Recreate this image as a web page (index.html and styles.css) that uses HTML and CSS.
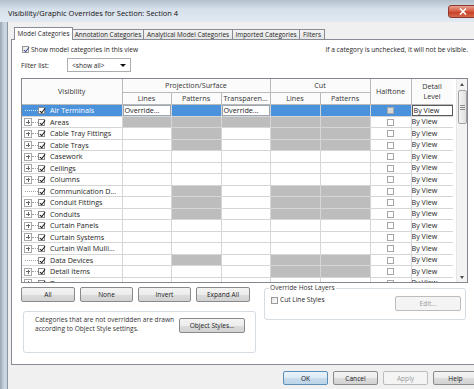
FILE: index.html
```html
<!DOCTYPE html>
<html lang="en">
<head>
    <meta charset="UTF-8">
    <title>Visibility/Graphic Overrides for Section: Section 4</title>
    <link rel="stylesheet" href="styles.css">
</head>
<body>
<div class="window">
    <div class="titlebar">
        <span class="title">Visibility/Graphic Overrides for Section: Section 4</span>
        <span class="close">
            <svg width="8" height="7" viewBox="0 0 8 7"><path d="M1 0.5L7 6.5M7 0.5L1 6.5" stroke="#fff" stroke-width="1.6"/></svg>
        </span>
    </div>
    <div class="client">
        <div class="tabs">
            <span class="tab active t-model">Model Categories</span>
            <span class="tab t-anno">Annotation Categories</span>
            <span class="tab t-anal">Analytical Model Categories</span>
            <span class="tab t-imp">Imported Categories</span>
            <span class="tab t-filt">Filters</span>
        </div>
        <div class="panel">
            <div class="top-row">
                <span class="box on blue"></span>
                <span class="lbl">Show model categories in this view</span>
                <span class="note">If a category is unchecked, it will not be visible.</span>
            </div>
            <div class="filter-row">
                <span class="filter-label">Filter list:</span>
                <div class="select"><span>&lt;show all&gt;</span><span class="caret"></span></div>
            </div>
            <div class="grid-wrap">
                <div class="grid-clip">
                    <table class="grid">
                        <colgroup>
                            <col style="width:100px"><col style="width:49px"><col style="width:50px"><col style="width:49px">
                            <col style="width:50px"><col style="width:50px"><col style="width:41px"><col style="width:42px">
                        </colgroup>
                        <thead>
                            <tr class="h1">
                                <th rowspan="2">Visibility</th>
                                <th colspan="3">Projection/Surface</th>
                                <th colspan="2">Cut</th>
                                <th rowspan="2">Halftone</th>
                                <th rowspan="2" class="two">Detail<br>Level</th>
                            </tr>
                            <tr class="h2">
                                <th>Lines</th><th>Patterns</th><th>Transparen...</th><th>Lines</th><th>Patterns</th>
                            </tr>
                        </thead>
                        <tbody>
                            <tr class="sel">
                                <td class="vis"><span class="node leaf"></span><span class="box on"></span><span class="name">Air Terminals</span></td>
                                <td class="edit">Override...</td><td></td><td class="edit">Override...</td><td></td><td></td>
                                <td class="half"><span class="box dim"></span></td><td class="det"><span class="combo">By View</span></td>
                            </tr>
                            <tr>
                                <td class="vis"><span class="node exp"></span><span class="box on"></span><span class="name">Areas</span></td>
                                <td class="na"></td><td class="na"></td><td class="na"></td><td class="na"></td><td class="na"></td>
                                <td class="half"><span class="box"></span></td><td class="det">By View</td>
                            </tr>
                            <tr>
                                <td class="vis"><span class="node exp"></span><span class="box on"></span><span class="name">Cable Tray Fittings</span></td>
                                <td></td><td class="na"></td><td></td><td class="na"></td><td class="na"></td>
                                <td class="half"><span class="box"></span></td><td class="det">By View</td>
                            </tr>
                            <tr>
                                <td class="vis"><span class="node exp"></span><span class="box on"></span><span class="name">Cable Trays</span></td>
                                <td></td><td class="na"></td><td></td><td class="na"></td><td class="na"></td>
                                <td class="half"><span class="box"></span></td><td class="det">By View</td>
                            </tr>
                            <tr>
                                <td class="vis"><span class="node exp"></span><span class="box on"></span><span class="name">Casework</span></td>
                                <td></td><td></td><td></td><td></td><td></td>
                                <td class="half"><span class="box"></span></td><td class="det">By View</td>
                            </tr>
                            <tr>
                                <td class="vis"><span class="node exp"></span><span class="box on"></span><span class="name">Ceilings</span></td>
                                <td></td><td></td><td></td><td></td><td></td>
                                <td class="half"><span class="box"></span></td><td class="det">By View</td>
                            </tr>
                            <tr>
                                <td class="vis"><span class="node exp"></span><span class="box on"></span><span class="name">Columns</span></td>
                                <td></td><td></td><td></td><td></td><td></td>
                                <td class="half"><span class="box"></span></td><td class="det">By View</td>
                            </tr>
                            <tr>
                                <td class="vis"><span class="node leaf"></span><span class="box on"></span><span class="name">Communication D...</span></td>
                                <td></td><td class="na"></td><td></td><td class="na"></td><td class="na"></td>
                                <td class="half"><span class="box"></span></td><td class="det">By View</td>
                            </tr>
                            <tr>
                                <td class="vis"><span class="node exp"></span><span class="box on"></span><span class="name">Conduit Fittings</span></td>
                                <td></td><td class="na"></td><td></td><td class="na"></td><td class="na"></td>
                                <td class="half"><span class="box"></span></td><td class="det">By View</td>
                            </tr>
                            <tr>
                                <td class="vis"><span class="node exp"></span><span class="box on"></span><span class="name">Conduits</span></td>
                                <td></td><td class="na"></td><td></td><td class="na"></td><td class="na"></td>
                                <td class="half"><span class="box"></span></td><td class="det">By View</td>
                            </tr>
                            <tr>
                                <td class="vis"><span class="node exp"></span><span class="box on"></span><span class="name">Curtain Panels</span></td>
                                <td></td><td></td><td></td><td></td><td></td>
                                <td class="half"><span class="box"></span></td><td class="det">By View</td>
                            </tr>
                            <tr>
                                <td class="vis"><span class="node exp"></span><span class="box on"></span><span class="name">Curtain Systems</span></td>
                                <td></td><td></td><td></td><td></td><td></td>
                                <td class="half"><span class="box"></span></td><td class="det">By View</td>
                            </tr>
                            <tr>
                                <td class="vis"><span class="node exp"></span><span class="box on"></span><span class="name">Curtain Wall Mulli...</span></td>
                                <td></td><td></td><td></td><td></td><td></td>
                                <td class="half"><span class="box"></span></td><td class="det">By View</td>
                            </tr>
                            <tr>
                                <td class="vis"><span class="node leaf"></span><span class="box on"></span><span class="name">Data Devices</span></td>
                                <td></td><td class="na"></td><td></td><td class="na"></td><td class="na"></td>
                                <td class="half"><span class="box"></span></td><td class="det">By View</td>
                            </tr>
                            <tr>
                                <td class="vis"><span class="node exp"></span><span class="box on"></span><span class="name">Detail Items</span></td>
                                <td></td><td></td><td></td><td class="na"></td><td class="na"></td>
                                <td class="half"><span class="box"></span></td><td class="det">By View</td>
                            </tr>
                            <tr>
                                <td class="vis"><span class="node exp"></span><span class="box on"></span><span class="name">Doors</span></td>
                                <td></td><td></td><td></td><td></td><td></td>
                                <td class="half"><span class="box"></span></td><td class="det">By View</td>
                            </tr>
                        </tbody>
                    </table>
                </div>
                <div class="scrollbar">
                    <span class="sb-btn"><span class="tri up"></span></span>
                    <span class="sb-thumb"><span class="grip"></span></span>
                    <span class="sb-track"></span>
                    <span class="sb-btn"><span class="tri down"></span></span>
                </div>
            </div>
            <div class="lower">
                <div class="lower-left">
                    <div class="btn-row">
                        <span class="btn w54">All</span>
                        <span class="btn w53">None</span>
                        <span class="btn w53">Invert</span>
                        <span class="btn w54">Expand All</span>
                    </div>
                    <div class="group styles-group">
                        <p class="styles-text">Categories that are not overridden are drawn<br>according to Object Style settings.</p>
                        <span class="btn styles-btn">Object Styles...</span>
                    </div>
                </div>
                <fieldset class="group host-group">
                    <legend>Override Host Layers</legend>
                    <div class="host-row">
                        <span class="box"></span>
                        <span class="lbl">Cut Line Styles</span>
                        <span class="btn disabled edit-btn">Edit...</span>
                    </div>
                </fieldset>
            </div>
        </div>
        <div class="footer">
            <span class="btn default">OK</span>
            <span class="btn">Cancel</span>
            <span class="btn disabled">Apply</span>
            <span class="btn">Help</span>
        </div>
    </div>
</div>
</body>
</html>
```

FILE: styles.css
```css
* {
    box-sizing: border-box;
}
body {
    margin: 0;
    font-family: "Open Sans", "Noto Sans", sans-serif;
    font-size: 6.6px;
    color: #1e1e1e;
}
.window {
    width: 474px;
    height: 389px;
    overflow: hidden;
    display: flex;
    flex-direction: column;
    background: linear-gradient(to right, #9aa5b0, #c9d5e1 4px);
}
.titlebar {
    height: 22px;
    flex: none;
    display: flex;
    align-items: center;
    padding-left: 8px;
    background: linear-gradient(#b3bfcb, #d6e0ea 40%, #e2e9f1);
}
.title {
    font-size: 7.5px;
    color: #111;
    padding-top: 4px;
}
.close {
    margin-left: auto;
    margin-right: -4px;
    margin-top: 1px;
    width: 30px;
    height: 13px;
    border: 1px solid #8a3a30;
    border-radius: 3px;
    background: linear-gradient(#e8a190, #d5573f 50%, #c63a22 51%, #d86a4c);
    display: flex;
    align-items: center;
    justify-content: center;
}
.client {
    flex: 1;
    margin-left: 7px;
    border-left: 1px solid #8c98a4;
    background: #f0f0f0;
    display: flex;
    flex-direction: column;
}
.tabs {
    height: 17px;
    flex: none;
    display: flex;
    align-items: flex-end;
    padding-left: 6px;
}
.tab {
    height: 10px;
    line-height: 9px;
    margin-right: -1px;
    border: 1px solid #898c95;
    border-bottom: none;
    background: linear-gradient(#f5f5f5, #e4e4e4);
    font-size: 6.4px;
    text-align: center;
    white-space: nowrap;
}
.tab.active {
    height: 13px;
    line-height: 11px;
    margin-bottom: -1px;
    background: #fff;
    position: relative;
    z-index: 1;
}
.t-model {
    width: 59px;
}
.t-anno {
    width: 72px;
}
.t-anal {
    width: 90px;
}
.t-imp {
    width: 68px;
}
.t-filt {
    width: 26px;
}
.panel {
    margin-left: 3px;
    width: 470px;
    height: 326px;
    flex: none;
    border: 1px solid #898c95;
    background: #fff;
    padding: 0 12px 0 9px;
}
.top-row {
    margin-top: 4px;
    height: 10px;
    display: flex;
    align-items: center;
}
.box {
    display: inline-block;
    width: 7px;
    height: 7px;
    flex: none;
    border: 1px solid #9a9a9a;
    background: linear-gradient(135deg, #e4e4e4, #fff);
    vertical-align: middle;
    position: relative;
}
.box.on::after {
    content: "";
    position: absolute;
    left: 1.5px;
    top: -1px;
    width: 2px;
    height: 5px;
    border-right: 1.7px solid #111;
    border-bottom: 1.7px solid #111;
    transform: rotate(38deg);
}
.box.blue::after {
    border-color: #3b4f86;
}
.box.dim {
    background: #d3d3d3;
    border-color: #b5b5b5;
}
.top-row .box {
    margin-left: 1px;
}
.lbl {
    margin-left: 2px;
}
.note {
    margin-left: auto;
}
.filter-row {
    margin-top: 4px;
    height: 14px;
    display: flex;
    align-items: center;
}
.filter-label {
    width: 46px;
}
.select {
    width: 64px;
    height: 14px;
    border: 1px solid #abadb3;
    display: flex;
    align-items: center;
    padding: 0 4px;
    justify-content: space-between;
}
.caret {
    width: 0;
    height: 0;
    border-left: 3px solid transparent;
    border-right: 3px solid transparent;
    border-top: 3px solid #111;
}
.grid-wrap {
    margin-top: 6px;
    width: 447px;
    height: 205px;
    border: 1px solid #828790;
    display: flex;
}
.grid-clip {
    width: 431px;
    height: 203px;
    overflow: hidden;
}
.grid {
    width: 431px;
    table-layout: fixed;
    border-collapse: collapse;
    font-size: 7.2px;
}
.grid th,
.grid td {
    padding: 0;
    border: 1px solid #d6d6d6;
    white-space: nowrap;
    overflow: hidden;
}
.grid th {
    font-weight: normal;
    background: #fbfbfb;
    border-color: #b9b9b9;
    line-height: 8px;
    color: #333;
}
.grid th.two {
    line-height: 10px;
}
.grid tr > :first-child {
    border-left: none;
}
.grid .h1 th {
    border-top: none;
    height: 13px;
}
.grid .h2 th {
    height: 12px;
}
.grid td {
    height: 11.5px;
    line-height: 9px;
}
.grid .na {
    background: #bdbdbd;
}
.vis {
    padding-left: 2px;
}
.node {
    display: inline-flex;
    align-items: center;
    width: 16px;
    height: 7px;
    vertical-align: middle;
}
.node::after {
    content: "";
    flex: 1;
    border-top: 1px dotted #a3a3a3;
}
.node.exp::before {
    content: "";
    width: 6px;
    height: 6px;
    margin-left: 2px;
    border: 1px solid #a8a8a8;
    background:
        linear-gradient(#666, #666) center / 4px 1px no-repeat,
        linear-gradient(#666, #666) center / 1px 4px no-repeat,
        #fff;
}
.node.leaf::after {
    margin-left: 3px;
}
.vis .box {
    border-color: #8c8c8c;
    background: #fff;
}
.name {
    margin-left: 5px;
    vertical-align: middle;
}
.half {
    text-align: center;
}
.half .box {
    border-color: #a7a7a7;
    background: #fff;
}
.half .box.dim {
    background: #d8d8d8;
}
.det {
    padding-left: 2px;
}
.sel td {
    background: #4a92dc;
    color: #fff;
}
.sel .node::after {
    border-top-color: #d8e8f8;
}
.grid .sel .edit {
    background: #fff;
    color: #222;
    padding-left: 2px;
    box-shadow: inset 0 0 0 1px #9aa6b2;
}
.grid .sel .det {
    background: #fff;
    padding: 0;
}
.combo {
    display: block;
    height: 11px;
    color: #222;
    border: 1px solid #5a5a5a;
    padding-left: 1px;
}
.scrollbar {
    margin-left: 3px;
    width: 11px;
    display: flex;
    flex-direction: column;
    background: #f3f3f3;
    border-left: 1px solid #e6e6e6;
}
.sb-btn {
    height: 10px;
    flex: none;
    display: flex;
    align-items: center;
    justify-content: center;
}
.tri {
    width: 0;
    height: 0;
    border-left: 2.5px solid transparent;
    border-right: 2.5px solid transparent;
}
.tri.up {
    border-bottom: 3px solid #505050;
}
.tri.down {
    border-top: 3px solid #505050;
}
.sb-thumb {
    height: 34px;
    flex: none;
    margin: 1px 0 0 1px;
    border: 1px solid #a1a1a1;
    border-radius: 2px;
    background: linear-gradient(to right, #f4f4f4, #e0e0e0);
    display: flex;
    align-items: center;
    justify-content: center;
}
.grip {
    width: 5px;
    height: 5px;
    background: repeating-linear-gradient(#8a8a8a 0 1px, transparent 1px 2px);
}
.sb-track {
    flex: 1;
}
.lower {
    margin-top: 4px;
    display: flex;
    align-items: flex-start;
}
.lower-left {
    width: 236px;
    flex: none;
}
.btn-row {
    display: flex;
    gap: 5px;
}
.btn {
    display: flex;
    align-items: center;
    justify-content: center;
    height: 15px;
    border: 1px solid #8a8a8a;
    border-radius: 2px;
    background: linear-gradient(#f4f4f4, #ececec 50%, #dcdcdc 51%, #d2d2d2);
    color: #222;
    white-space: nowrap;
}
.w54 {
    width: 54px;
}
.w53 {
    width: 53px;
}
.btn.disabled {
    border-color: #bcbcbc;
    background: #f4f4f4;
    color: #9a9a9a;
}
.btn.default {
    border-color: #5c8fb8;
    background: linear-gradient(#eaf3fa, #dbeaf5 50%, #c7dcec 51%, #bcd5e8);
}
.group {
    border: 1px solid #d5dce2;
    border-radius: 3px;
}
.styles-group {
    margin: 9px 0 0 2px;
    width: 233px;
    height: 42px;
    display: flex;
    align-items: flex-start;
    padding: 3px 10px 0 11px;
}
.styles-text {
    margin: 0;
    line-height: 9px;
    color: #333;
    white-space: nowrap;
}
.styles-btn {
    margin: 3px 0 0 auto;
    width: 66px;
}
.host-group {
    margin: -3px 0 0 7px;
    width: 202px;
    height: 36px;
    padding: 0 4px 0 6px;
    min-width: 0;
}
.host-group legend {
    padding: 0 1px;
    margin-left: -2px;
    line-height: 8px;
    color: #333;
}
.host-row {
    display: flex;
    align-items: flex-start;
}
.host-row .box {
    margin-top: 5px;
}
.host-row .lbl {
    margin-top: 3px;
}
.edit-btn {
    margin-left: auto;
    margin-top: 4px;
    width: 66px;
}
.footer {
    display: flex;
    gap: 5px;
    padding: 6px 0 0 275px;
}
.footer .btn {
    width: 45px;
    height: 14px;
    flex: none;
}
```
